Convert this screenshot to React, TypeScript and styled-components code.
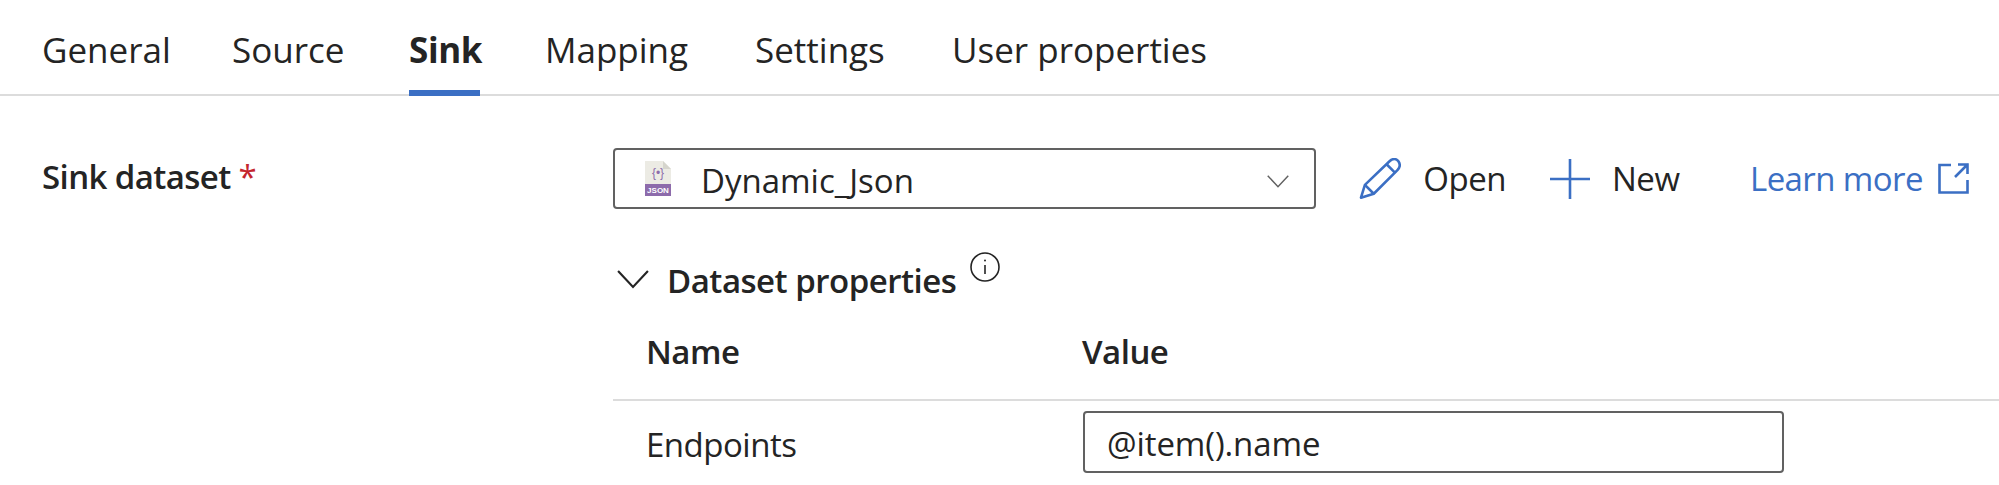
import React from "react";
import styled, { createGlobalStyle } from "styled-components";

const colors = {
  text: "#242424",
  border: "#dcdcdc",
  control: "#616161",
  blue: "#3b6fc4",
  red: "#c4262e",
};

const tabs = [
  { label: "General", width: 125 },
  { label: "Source", width: 112 },
  { label: "Sink", width: 71 },
  { label: "Mapping", width: 145 },
  { label: "Settings", width: 132 },
  { label: "User properties", width: 251 },
];

const GlobalStyle = createGlobalStyle`
  html, body {
    margin: 0;
    background: #fff;
  }
  body {
    font-family: "Open Sans", "Noto Sans", sans-serif;
    color: ${colors.text};
  }
`;

const JsonFileIcon = () => (
  <svg width="26" height="35" viewBox="0 0 26 35">
    <path d="M0 0H18L26 8V35H0Z" fill="#ecebe4" />
    <path d="M18 0L26 8H18Z" fill="#d6d5cd" />
    <rect y="23" width="26" height="12" fill="#8d6bab" />
    <text x="13" y="31.8" textAnchor="middle" fontSize="8" fontWeight="700" fill="#fff" fontFamily="Liberation Sans, sans-serif">
      JSON
    </text>
    <text x="13" y="16" textAnchor="middle" fontSize="12" fill="#8d6bab" fontFamily="Liberation Sans, sans-serif">
      {"{•}"}
    </text>
  </svg>
);

const Chevron = ({ size, color }: { size: number; color: string }) => (
  <svg width={size} height={size * 0.6} viewBox="0 0 30 18" fill="none" stroke={color} strokeWidth="2">
    <path d="M1 1L15 16L29 1" />
  </svg>
);

const PencilIcon = () => (
  <svg width="43" height="42" viewBox="0 0 43 42" fill="none" stroke={colors.blue} strokeWidth="2.6" strokeLinejoin="round">
    <path d="M2 40L6 27L31 3C34 0 38 0 40 3C42 6 42 9 39 12L15 36Z" />
    <path d="M6 27L15 36" />
    <path d="M28 6L37 15" />
  </svg>
);

const PlusIcon = () => (
  <svg width="40" height="40" viewBox="0 0 40 40" stroke={colors.blue} strokeWidth="2.6">
    <path d="M20 0V40M0 20H40" />
  </svg>
);

const ExternalIcon = () => (
  <svg width="31" height="31" viewBox="0 0 31 31" fill="none" stroke={colors.blue} strokeWidth="2.6">
    <path d="M13 2H1.5V29.5H29.5V17" />
    <path d="M17 14L30 1M20 1.5H29.5V11" />
  </svg>
);

const InfoIcon = () => (
  <svg width="30" height="30" viewBox="0 0 30 30" fill="none" stroke={colors.text} strokeWidth="1.6">
    <circle cx="15" cy="15" r="14" />
    <path d="M15 13V22" />
    <circle cx="15" cy="8.5" r="1" fill={colors.text} stroke="none" />
  </svg>
);

export default function App() {
  return (
    <>
      <GlobalStyle />
      <Page>
        <TabBar>
          {tabs.map((tab) => (
            <Tab key={tab.label} $active={tab.label === "Sink"} $width={tab.width}>
              {tab.label}
            </Tab>
          ))}
        </TabBar>

        <Form>
          <FieldLabel>
            Sink dataset <Required>*</Required>
          </FieldLabel>

          <div>
            <DatasetRow>
              <Select>
                <SelectIcon>
                  <JsonFileIcon />
                </SelectIcon>
                <SelectValue>Dynamic_Json</SelectValue>
                <SelectChevron>
                  <Chevron size={22} color={colors.control} />
                </SelectChevron>
              </Select>
              <ActionButton $width={147}>
                <PencilIcon />
                Open
              </ActionButton>
              <ActionButton $width={132} $last>
                <PlusIcon />
                New
              </ActionButton>
              <LearnMore>
                Learn more
                <ExternalIcon />
              </LearnMore>
            </DatasetRow>

            <SectionHeader>
              <Chevron size={32} color={colors.text} />
              <SectionTitle>Dataset properties</SectionTitle>
              <InfoWrap>
                <InfoIcon />
              </InfoWrap>
            </SectionHeader>

            <HeaderRow>
              <HeaderCell>Name</HeaderCell>
              <HeaderCell>Value</HeaderCell>
            </HeaderRow>

            <ValueRow>
              <NameCell>Endpoints</NameCell>
              <ValueInput>@item().name</ValueInput>
            </ValueRow>
          </div>
        </Form>
      </Page>
    </>
  );
}

const Page = styled.div`
  width: 1999px;
  height: 485px;
  overflow: hidden;
  font-size: 33px;
`;

const TabBar = styled.div`
  display: flex;
  gap: 65px;
  height: 94px;
  padding-left: 42px;
  border-bottom: 2px solid ${colors.border};
`;

const Tab = styled.div<{ $active?: boolean; $width: number }>`
  box-sizing: border-box;
  width: ${(p) => p.$width}px;
  height: 96px;
  margin-bottom: -2px;
  font-size: 35px;
  line-height: 100px;
  letter-spacing: ${(p) => (p.$active ? "-0.4px" : "0")};
  white-space: nowrap;
  font-weight: ${(p) => (p.$active ? 700 : 400)};
  border-bottom: ${(p) => (p.$active ? `6px solid ${colors.blue}` : "none")};
`;

const Form = styled.div`
  display: grid;
  grid-template-columns: 613px 1fr;
  padding-top: 52px;
`;

const FieldLabel = styled.div`
  padding-left: 42px;
  padding-top: 4px;
  line-height: 50px;
  font-weight: 600;
  letter-spacing: -0.6px;
`;

const Required = styled.span`
  color: ${colors.red};
  font-weight: 400;
`;

const DatasetRow = styled.div`
  display: flex;
  align-items: center;
  height: 61px;
`;

const Select = styled.div`
  display: flex;
  align-items: center;
  box-sizing: border-box;
  width: 703px;
  height: 61px;
  padding: 0 25px 0 30px;
  border: 2px solid ${colors.control};
  border-radius: 4px;
  margin-right: 43px;
`;

const SelectIcon = styled.div`
  display: flex;
  margin-right: 30px;
`;

const SelectValue = styled.div`
  flex: 1;
  padding-top: 3px;
  letter-spacing: 0;
`;

const SelectChevron = styled.div`
  display: flex;
  padding-top: 6px;
`;

const ActionButton = styled.div<{ $width: number; $last?: boolean }>`
  display: flex;
  align-items: center;
  gap: 22px;
  width: ${(p) => p.$width}px;
  flex-shrink: 0;
  margin-right: ${(p) => (p.$last ? 68 : 44)}px;
  letter-spacing: -0.5px;
`;

const LearnMore = styled.a`
  display: flex;
  align-items: center;
  gap: 15px;
  color: ${colors.blue};
  white-space: nowrap;
  letter-spacing: -0.6px;
`;

const SectionHeader = styled.div`
  display: flex;
  align-items: center;
  height: 60px;
  margin-top: 41px;
  padding-left: 4px;
`;

const SectionTitle = styled.div`
  margin-left: 18px;
  font-weight: 600;
  letter-spacing: -0.5px;
`;

const InfoWrap = styled.div`
  position: relative;
  top: -13px;
  margin-left: 14px;
  display: flex;
`;

const HeaderRow = styled.div`
  display: grid;
  grid-template-columns: 436px 1fr;
  align-items: center;
  height: 91px;
  padding: 0 0 7px 33px;
  box-sizing: border-box;
  border-bottom: 2px solid ${colors.border};
  font-weight: 600;
`;

const HeaderCell = styled.div`
  letter-spacing: -0.5px;
`;

const ValueRow = styled.div`
  display: grid;
  grid-template-columns: 437px 701px;
  align-items: center;
  margin-top: 10px;
  padding-left: 33px;
`;

const NameCell = styled.div`
  padding-top: 4px;
  letter-spacing: -0.5px;
`;

const ValueInput = styled.div`
  box-sizing: border-box;
  height: 62px;
  line-height: 62px;
  padding-left: 22px;
  border: 2px solid ${colors.control};
  border-radius: 4px;
  letter-spacing: -0.1px;
`;
